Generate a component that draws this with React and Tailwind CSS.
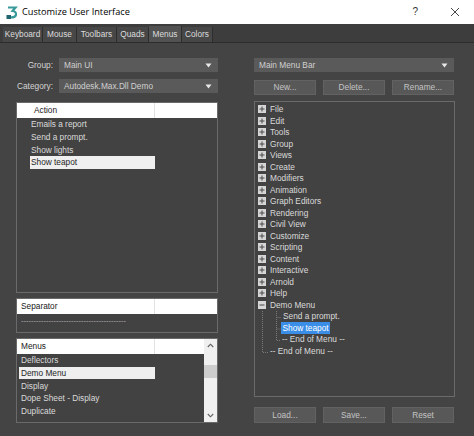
import React from 'react';

const tabs = ['Keyboard', 'Mouse', 'Toolbars', 'Quads', 'Menus', 'Colors'];
const tabWidths = [40, 34, 40, 32, 33, 31];

const actions = ['Emails a report', 'Send a prompt.', 'Show lights', 'Show teapot'];
const menus = ['Deflectors', 'Demo Menu', 'Display', 'Dope Sheet - Display', 'Duplicate'];

const roots = [
    'File', 'Edit', 'Tools', 'Group', 'Views', 'Create', 'Modifiers', 'Animation',
    'Graph Editors', 'Rendering', 'Civil View', 'Customize', 'Scripting', 'Content',
    'Interactive', 'Arnold', 'Help',
];

function Arrow() {
    return (
        <svg width="7" height="5" viewBox="0 0 7 5" className="shrink-0">
            <path d="M0.5 0.5 L6.5 0.5 L3.5 4.5 Z" fill="#e8e8e8" />
        </svg>
    );
}

function Dropdown({ label, width }) {
    return (
        <div className={`h-[14px] ${width} bg-[#5a5a5a] flex items-center justify-between pl-[5px] pr-[6px] text-[#d0d0d0]`}>
            <span>{label}</span>
            <Arrow />
        </div>
    );
}

function Button({ children }) {
    return (
        <div className="w-[62px] h-full bg-[#585858] border border-[#626262] flex items-center justify-center text-[#c4c4c4]">
            {children}
        </div>
    );
}

function Expander({ open }) {
    return (
        <svg width="8" height="8" viewBox="0 0 8 8" className="shrink-0">
            <rect x="0" y="0" width="8" height="8" fill="#d6d6d6" />
            <path d="M1.5 4 H6.5" stroke="#4a4a4a" strokeWidth="1" />
            {!open && <path d="M4 1.5 V6.5" stroke="#4a4a4a" strokeWidth="1" />}
        </svg>
    );
}

function ListHeader({ title, indent }) {
    return (
        <div className="h-[15px] bg-white flex text-[#202020] shrink-0">
            <div className={`w-[138px] h-full border-r border-[#e2e2e2] flex items-center ${indent}`}>{title}</div>
        </div>
    );
}

export default function App() {
    return (
        <div
            className="w-[474px] h-[436px] bg-[#444444] overflow-hidden flex flex-col text-[8.3px] leading-none"
            style={{ fontFamily: '"Liberation Sans", Arial, sans-serif' }}
        >
            {/* barra de título */}
            <div className="h-[24px] bg-white flex items-center shrink-0 text-black">
                <svg width="14" height="15" viewBox="0 0 14 15" className="ml-[5px]">
                    <path d="M3 2.5 H10.5 L7.5 6 Q11.5 6.5 11 9.8 Q10 13 4.5 12.2" fill="none" stroke="#3a9a9a" strokeWidth="2.2" />
                    <rect x="1.5" y="10" width="4.5" height="4" fill="#1f6670" />
                </svg>
                <span className="ml-[3px] text-[9.2px]" style={{ fontFamily: '"Open Sans", "Liberation Sans", sans-serif' }}>
                    Customize User Interface
                </span>
                <span className="ml-auto text-[10px] text-[#333]">?</span>
                <svg width="10" height="10" viewBox="0 0 10 10" className="ml-[32px] mr-[14px]">
                    <path d="M1 1 L9 9 M9 1 L1 9" stroke="#333" strokeWidth="0.9" />
                </svg>
            </div>

            {/* pestañas */}
            <div className="h-[19px] bg-[#3d3d3d] border-b border-[#2c2c2c] flex items-end pl-[3px] shrink-0">
                {tabs.map((t, i) => (
                    <div
                        key={t}
                        style={{ width: tabWidths[i] }}
                        className={`h-[15px] flex items-center justify-center border-r border-[#2e2e2e] text-[#dcdcdc] ${t === 'Menus' ? 'bg-[#525252] h-[16px]' : 'bg-[#474747]'}`}
                    >
                        {t}
                    </div>
                ))}
            </div>

            <div className="flex">
                {/* columna izquierda */}
                <div className="ml-[16px] w-[202px] pt-[15px] flex flex-col">
                    <div className="flex items-center h-[14px]">
                        <span className="w-[38px] text-right pr-[1px] text-[#d4d4d4]">Group:</span>
                        <div className="ml-[5px]"><Dropdown label="Main UI" width="w-[159px]" /></div>
                    </div>
                    <div className="flex items-center h-[14px] mt-[7px]">
                        <span className="w-[38px] text-right pr-[1px] text-[#d4d4d4]">Category:</span>
                        <div className="ml-[5px]"><Dropdown label="Autodesk.Max.Dll Demo" width="w-[159px]" /></div>
                    </div>

                    <div className="mt-[9px] h-[191px] border border-[#6a6a6a] bg-[#424242] flex flex-col">
                        <ListHeader title="Action" indent="pl-[17px]" />
                        {actions.map((a) => (
                            <div key={a} className="h-[12.7px] flex items-center">
                                <div className={`ml-[13px] w-[125px] h-full flex items-center pl-[1px] ${a === 'Show teapot' ? 'bg-[#efefef] text-[#1e1e1e]' : 'text-[#dadada]'}`}>
                                    {a}
                                </div>
                            </div>
                        ))}
                    </div>

                    <div className="mt-[5px] h-[35px] border border-[#6a6a6a] bg-[#424242] flex flex-col">
                        <ListHeader title="Separator" indent="pl-[4px]" />
                        <div className="h-[12.7px] flex items-center pl-[4px] text-[#b0b0b0] text-[7.5px]">
                            ------------------------------------------
                        </div>
                    </div>

                    <div className="mt-[5px] h-[85px] border border-[#6a6a6a] bg-[#424242] flex overflow-hidden">
                        <div className="flex-1 flex flex-col overflow-hidden">
                            <div className="h-[15px] bg-white flex text-[#202020] shrink-0">
                                <div className="w-[138px] h-full border-r border-[#e2e2e2] flex items-center pl-[4px]">Menus</div>
                            </div>
                            {menus.map((m) => (
                                <div key={m} className="h-[12.7px] shrink-0 flex items-center">
                                    <div className={`ml-[2px] w-[136px] h-full flex items-center pl-[2px] ${m === 'Demo Menu' ? 'bg-[#efefef] text-[#1e1e1e]' : 'text-[#dadada]'}`}>
                                        {m}
                                    </div>
                                </div>
                            ))}
                        </div>
                        <div className="w-[13px] bg-[#f0f0f0] flex flex-col items-center">
                            <svg width="7" height="5" viewBox="0 0 7 5" className="mt-[4px]">
                                <path d="M0.8 4 L3.5 1.2 L6.2 4" fill="none" stroke="#606060" strokeWidth="1.1" />
                            </svg>
                            <div className="mt-[17px] w-full h-[13px] bg-[#cdcdcd]" />
                            <svg width="7" height="5" viewBox="0 0 7 5" className="mt-auto mb-[4px]">
                                <path d="M0.8 1 L3.5 3.8 L6.2 1" fill="none" stroke="#606060" strokeWidth="1.1" />
                            </svg>
                        </div>
                    </div>
                </div>

                {/* columna derecha */}
                <div className="ml-[36px] w-[201px] pt-[15px] flex flex-col">
                    <Dropdown label="Main Menu Bar" width="w-[200px]" />
                    <div className="mt-[8px] h-[15px] flex gap-[7px]">
                        <Button>New...</Button>
                        <Button>Delete...</Button>
                        <Button>Rename...</Button>
                    </div>

                    <div className="relative mt-[6px] h-[296px] border border-[#6a6a6a] bg-[#424242] pt-[1.5px] text-[#dadada]">
                        {roots.map((r) => (
                            <div key={r} className="h-[11.5px] flex items-center pl-[3px] gap-[4px]">
                                <Expander />
                                <span>{r}</span>
                            </div>
                        ))}
                        <div className="h-[11.5px] flex items-center pl-[3px] gap-[4px]">
                            <Expander open />
                            <span>Demo Menu</span>
                        </div>
                        <div className="h-[11.5px] flex items-center pl-[28px]">Send a prompt.</div>
                        <div className="h-[11.5px] flex items-center pl-[26px]">
                            <span className="bg-[#3a8ee8] text-white h-full flex items-center px-[1.5px]">Show teapot</span>
                        </div>
                        <div className="h-[11.5px] flex items-center pl-[27px]">-- End of Menu --</div>
                        <div className="h-[11.5px] flex items-center pl-[15px]">-- End of Menu --</div>

                        <svg className="absolute left-0 top-0 pointer-events-none" width="200" height="296">
                            <g stroke="#7a7a7a" strokeWidth="1" strokeDasharray="1 1" fill="none">
                                <path d="M7.5 209 V250.5 H13" />
                                <path d="M21.5 209 V238.5 H26 M21.5 215.5 H26 M21.5 227 H26" />
                            </g>
                        </svg>
                    </div>

                    <div className="mt-[10px] h-[16px] flex gap-[7px]">
                        <Button>Load...</Button>
                        <Button>Save...</Button>
                        <Button>Reset</Button>
                    </div>
                </div>
            </div>
        </div>
    );
}
